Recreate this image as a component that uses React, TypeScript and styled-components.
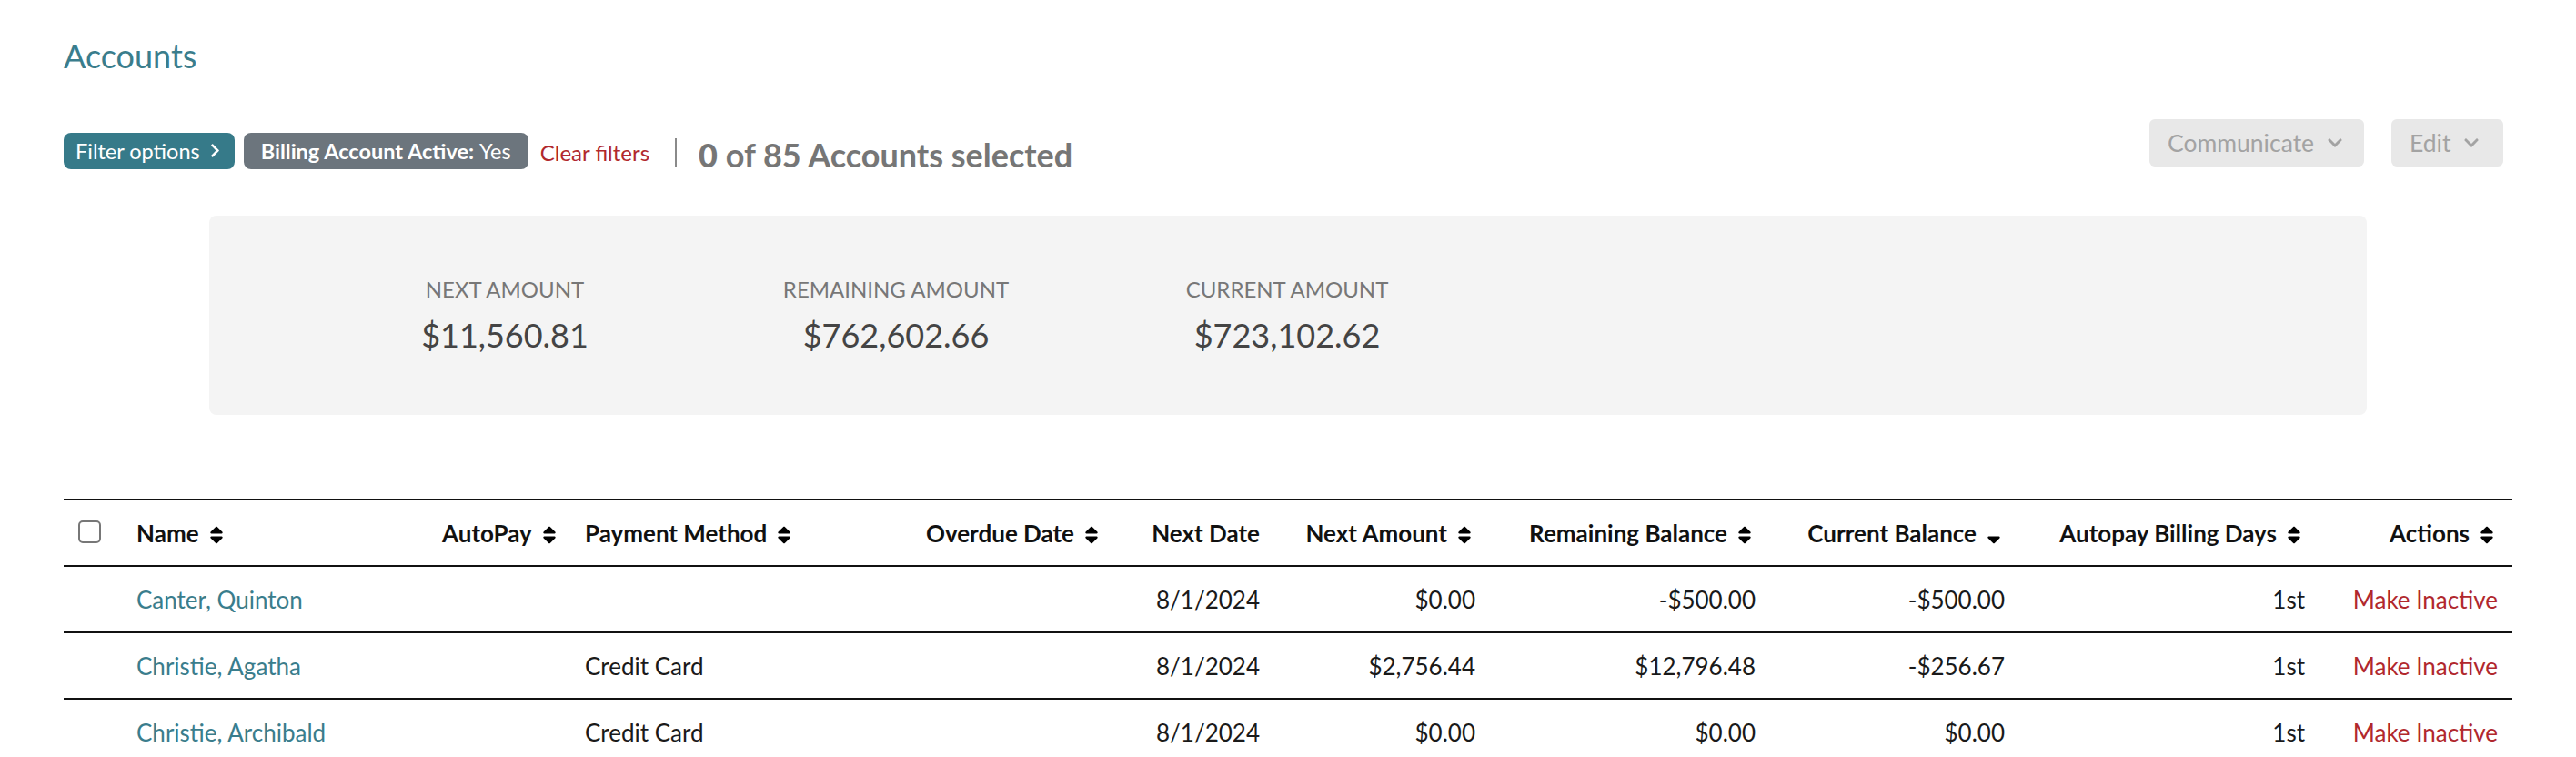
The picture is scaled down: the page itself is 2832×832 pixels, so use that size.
import styled, { createGlobalStyle } from "styled-components";
import { FaSort, FaSortDown, FaChevronRight, FaChevronDown } from "react-icons/fa";

const GlobalStyle = createGlobalStyle`
  body {
    margin: 0;
    background: #fff;
    font-family: Lato, "Open Sans", sans-serif;
    color: #1a1a1a;
  }
`;

const Page = styled.div`
  padding: 39px 70px 0;
`;

const Title = styled.h1`
  margin: 0;
  font-size: 36px;
  line-height: 44px;
  font-weight: 400;
  color: #3a7d8c;
`;

const Toolbar = styled.div`
  margin-top: 48px;
  display: flex;
  justify-content: space-between;
  align-items: flex-start;
`;

const FilterGroup = styled.div`
  display: flex;
  align-items: center;
  height: 41px;
  margin-top: 14px;
`;

const Pill = styled.span<{ $tone: "teal" | "gray" }>`
  display: inline-flex;
  align-items: center;
  gap: ${(p) => (p.$tone === "teal" ? "8px" : "6px")};
  height: 40px;
  padding: 0 ${(p) => (p.$tone === "teal" ? "13px" : "19px")};
  margin-right: ${(p) => (p.$tone === "teal" ? "10px" : "13px")};
  border-radius: 8px;
  font-size: 23.5px;
  color: #fff;
  background: ${(p) => (p.$tone === "teal" ? "#367a89" : "#6c757d")};
  b {
    font-weight: 700;
  }
`;

const ClearLink = styled.a`
  font-size: 24px;
  color: #b1282d;
  margin-top: 4px;
  cursor: pointer;
`;

const Divider = styled.span`
  width: 2px;
  height: 32px;
  margin: 5px 24px 0 28px;
  background: #8a8a8a;
`;

const Count = styled.span`
  font-size: 36px;
  font-weight: 700;
  color: #767676;
  margin-top: 9px;
  b {
    font-weight: 900;
  }
`;

const ActionGroup = styled.div`
  display: flex;
  gap: 30px;
  margin-right: 10px;
`;

const MenuButton = styled.button<{ $width: number }>`
  display: inline-flex;
  align-items: center;
  gap: 14px;
  width: ${(p) => p.$width}px;
  height: 52px;
  padding: 0 0 0 20px;
  border: none;
  border-radius: 6px;
  background: #e8e8e8;
  color: #a3a3a3;
  font-family: inherit;
  font-size: 26.5px;
`;

const Summary = styled.div`
  margin: 51px 160px 0;
  height: 219px;
  border-radius: 8px;
  background: #f4f4f4;
  display: flex;
  align-items: center;
  padding-left: 110px;
`;

const Stat = styled.div`
  width: 430px;
  text-align: center;
`;

const StatLabel = styled.div`
  font-size: 24px;
  line-height: 28px;
  color: #777;
  text-transform: uppercase;
`;

const StatValue = styled.div`
  margin-top: 15px;
  font-size: 36px;
  line-height: 42px;
  color: #444;
`;

const Table = styled.table`
  margin-top: 92px;
  width: 100%;
  border-collapse: collapse;
  table-layout: fixed;
  border-top: 2px solid #111;
  font-size: 26px;
`;

const HeadCell = styled.th<{ $align?: "left" | "right" }>`
  height: 71px;
  padding: 0 16px;
  text-align: ${(p) => p.$align ?? "left"};
  font-weight: 700;
  color: #111;
  white-space: nowrap;
  border-bottom: 2px solid #111;
  vertical-align: middle;
`;

const Cell = styled.td<{ $align?: "left" | "right" }>`
  height: 71px;
  padding: 0 16px;
  text-align: ${(p) => p.$align ?? "left"};
  color: #1a1a1a;
  white-space: nowrap;
  border-bottom: 2px solid #111;
`;

const SortIcon = styled.span`
  display: inline-flex;
  vertical-align: -4px;
  margin-left: 7px;
  color: #000;
`;

const Check = styled.input`
  appearance: none;
  display: block;
  width: 25px;
  height: 25px;
  margin: -2px 0 0;
  border: 2px solid #777;
  border-radius: 5px;
  background: #fff;
`;

const NameLink = styled.a`
  color: #3a7d8c;
`;

const ActionLink = styled.a`
  color: #b1282d;
`;

type Col = { label: string; width: number; align: "left" | "right"; sort: "both" | "down" | "none" };

const columns: Col[] = [
  { label: "Name", width: 336, align: "left", sort: "both" },
  { label: "AutoPay", width: 157, align: "right", sort: "both" },
  { label: "Payment Method", width: 373, align: "left", sort: "both" },
  { label: "Overdue Date", width: 228, align: "right", sort: "both" },
  { label: "Next Date", width: 173, align: "right", sort: "none" },
  { label: "Next Amount", width: 237, align: "right", sort: "both" },
  { label: "Remaining Balance", width: 308, align: "right", sort: "both" },
  { label: "Current Balance", width: 274, align: "right", sort: "down" },
  { label: "Autopay Billing Days", width: 330, align: "right", sort: "both" },
  { label: "Actions", width: 212, align: "right", sort: "both" },
];

const rows = [
  { name: "Canter, Quinton", method: "", date: "8/1/2024", next: "$0.00", remaining: "-$500.00", current: "-$500.00", days: "1st" },
  { name: "Christie, Agatha", method: "Credit Card", date: "8/1/2024", next: "$2,756.44", remaining: "$12,796.48", current: "-$256.67", days: "1st" },
  { name: "Christie, Archibald", method: "Credit Card", date: "8/1/2024", next: "$0.00", remaining: "$0.00", current: "$0.00", days: "1st" },
];

const stats = [
  { label: "Next Amount", value: "$11,560.81" },
  { label: "Remaining Amount", value: "$762,602.66" },
  { label: "Current Amount", value: "$723,102.62" },
];

export default function App() {
  return (
    <>
      <GlobalStyle />
      <Page>
        <Title>Accounts</Title>
        <Toolbar>
          <FilterGroup>
            <Pill $tone="teal">
              Filter options <FaChevronRight size={17} />
            </Pill>
            <Pill $tone="gray">
              <b>Billing Account Active:</b>
              <span>Yes</span>
            </Pill>
            <ClearLink>Clear filters</ClearLink>
            <Divider />
            <Count>
              <b>0</b> of 85 Accounts selected
            </Count>
          </FilterGroup>
          <ActionGroup>
            <MenuButton $width={236}>
              Communicate <FaChevronDown size={18} />
            </MenuButton>
            <MenuButton $width={123}>
              Edit <FaChevronDown size={18} />
            </MenuButton>
          </ActionGroup>
        </Toolbar>
        <Summary>
          {stats.map((s) => (
            <Stat key={s.label}>
              <StatLabel>{s.label}</StatLabel>
              <StatValue>{s.value}</StatValue>
            </Stat>
          ))}
        </Summary>
        <Table>
          <colgroup>
            <col style={{ width: 64 }} />
            {columns.map((c) => (
              <col key={c.label} style={{ width: c.width }} />
            ))}
          </colgroup>
          <thead>
            <tr>
              <HeadCell>
                <Check type="checkbox" />
              </HeadCell>
              {columns.map((c) => (
                <HeadCell key={c.label} $align={c.align}>
                  {c.label}
                  {c.sort !== "none" && (
                    <SortIcon>{c.sort === "down" ? <FaSortDown size={24} /> : <FaSort size={24} />}</SortIcon>
                  )}
                </HeadCell>
              ))}
            </tr>
          </thead>
          <tbody>
            {rows.map((r) => (
              <tr key={r.name}>
                <Cell />
                <Cell>
                  <NameLink>{r.name}</NameLink>
                </Cell>
                <Cell />
                <Cell>{r.method}</Cell>
                <Cell />
                <Cell $align="right">{r.date}</Cell>
                <Cell $align="right">{r.next}</Cell>
                <Cell $align="right">{r.remaining}</Cell>
                <Cell $align="right">{r.current}</Cell>
                <Cell $align="right">{r.days}</Cell>
                <Cell $align="right">
                  <ActionLink>Make Inactive</ActionLink>
                </Cell>
              </tr>
            ))}
          </tbody>
        </Table>
      </Page>
    </>
  );
}
